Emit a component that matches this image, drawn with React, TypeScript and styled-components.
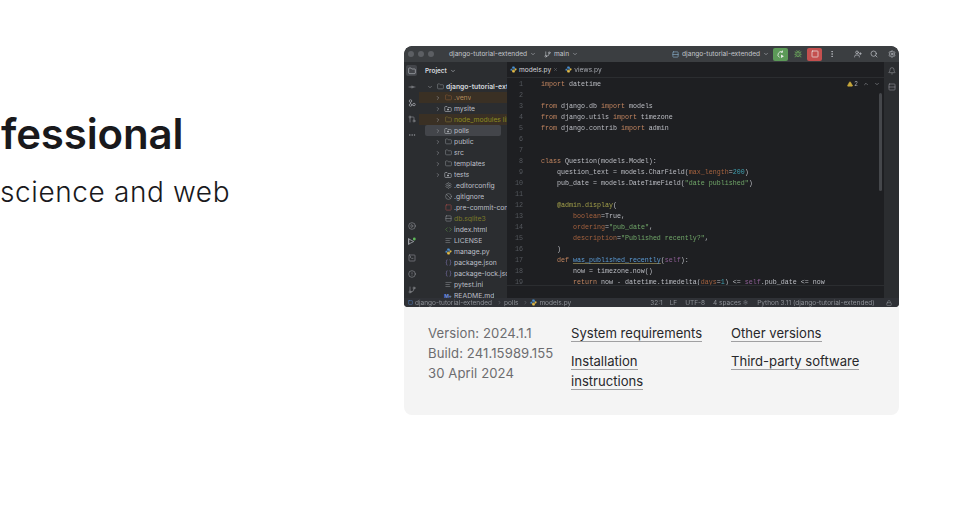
import { createGlobalStyle } from "styled-components";
import styled from "styled-components";
import {
  AlignLeft, Ban, Bell, Braces, Bug, ChevronDown, ChevronRight, ChevronUp, CircleAlert, Code, Folder,
  GitBranch, GitCommitHorizontal, GitPullRequest, Lock, MoreHorizontal, MoreVertical,
  PlayCircle, Rows2, Search, Settings, Square, SquareTerminal, TriangleAlert, UserPlus, X,
} from "lucide-react";
import type { ReactNode } from "react";

const GlobalStyle = createGlobalStyle`
  html, body { margin: 0; background: #fff; overflow: hidden; }
  body { font-family: Inter, "Liberation Sans", sans-serif; }
`;

const Page = styled.div`
  display: flex;
  width: 966px;
  height: 505px;
  overflow: hidden;
`;

const Hero = styled.div`
  flex: 0 0 404px;
  padding-top: 106px;
  box-sizing: border-box;
  color: #19191c;
`;

const Heading = styled.h1`
  margin: 0 0 0 1px;
  font-size: 42px;
  line-height: 56px;
  font-weight: 600;
  letter-spacing: -0.15px;
`;

const Subheading = styled.p`
  margin: 6px 0 0 0;
  font-size: 28px;
  line-height: 48px;
  font-weight: 300;
  white-space: nowrap;
  letter-spacing: 0.6px;
`;

const Card = styled.section`
  flex: 0 0 495px;
  height: 369px;
  margin-top: 46px;
  border-radius: 8px;
  background: #f4f4f4;
  overflow: hidden;
`;

const Shot = styled.div`
  height: 261px;
  display: flex;
  flex-direction: column;
  overflow: hidden;
  border-radius: 8px 8px 4px 4px;
  background: #2b2d30;
  color: #b8bbc2;
`;

const Blurred = styled.div`
  display: flex;
  flex-direction: column;
  height: 100%;
  filter: blur(0.35px);
`;

const TitleBar = styled.div`
  flex: 0 0 16px;
  display: flex;
  align-items: center;
  padding-left: 4px;
  background: #3b3e41;
  font-size: 6.6px;
  color: #c3c6cc;
  white-space: nowrap;
`;

const Light = styled.span`
  width: 6px;
  height: 6px;
  border-radius: 50%;
  margin-right: 4px;
  background: #5c5f63;
`;

const TitleGroup = styled.div<{ $left: number }>`
  display: flex;
  align-items: center;
  gap: 3px;
  margin-left: ${({ $left }) => $left}px;
`;

const RunButton = styled.span<{ $color: string }>`
  width: 15px;
  height: 13px;
  border-radius: 2px;
  display: flex;
  align-items: center;
  justify-content: center;
  background: ${({ $color }) => $color};
  color: #eef0ee;
`;

const TitleIcon = styled.span<{ $left: number }>`
  display: flex;
  margin-left: ${({ $left }) => $left}px;
`;

const Body = styled.div`
  flex: 1;
  display: flex;
  min-height: 0;
`;

const ToolStrip = styled.div<{ $width: number }>`
  flex: 0 0 ${({ $width }) => $width}px;
  display: flex;
  flex-direction: column;
  align-items: center;
  gap: 5px;
  padding-top: 3px;
  box-sizing: border-box;
  background: #2b2d30;
  color: #a4a7ad;
`;

const StripSlot = styled.span<{ $active?: boolean }>`
  width: 11px;
  height: 11px;
  display: flex;
  align-items: center;
  justify-content: center;
  border-radius: 2px;
  color: ${({ $active }) => ($active ? "#d5d8de" : "inherit")};
  background: ${({ $active }) => ($active ? "#43454a" : "transparent")};
`;

const StripBottom = styled.div`
  margin-top: auto;
  display: flex;
  flex-direction: column;
  gap: 5px;
  padding-bottom: 3px;
`;

const Project = styled.div`
  flex: 0 0 88px;
  overflow: hidden;
  background: #2b2d30;
  white-space: nowrap;
  font-size: 6.8px;
`;

const ProjectHead = styled.div`
  height: 18px;
  display: flex;
  align-items: center;
  gap: 3px;
  padding-left: 6px;
  font-weight: 600;
  font-size: 6.4px;
  color: #d5d8de;
`;

const Tree = styled.div`
  padding-top: 1px;
`;

const Row = styled.div<{ $tone?: string; $indent: number }>`
  height: 11px;
  display: flex;
  align-items: center;
  gap: 2px;
  padding-left: ${({ $indent }) => $indent}px;
  margin-right: ${({ $tone }) => ($tone === "selected" ? "6px" : "0")};
  margin-left: ${({ $tone }) => ($tone === "selected" ? "6px" : "0")};
  border-radius: ${({ $tone }) => ($tone === "selected" ? "2px" : "0")};
  background: ${({ $tone }) =>
    $tone === "selected" ? "#43454a" : $tone === "ignored" ? "#3a3024" : "transparent"};
`;

const RowLabel = styled.span<{ $color?: string; $bold?: boolean }>`
  min-width: 0;
  overflow: hidden;
  color: ${({ $color }) => $color ?? "#bcbfc6"};
  font-weight: ${({ $bold }) => ($bold ? 600 : 400)};
`;

const RowIcon = styled.span<{ $color?: string }>`
  flex: 0 0 8px;
  display: flex;
  align-items: center;
  justify-content: center;
  color: ${({ $color }) => $color ?? "#a4a7ad"};
`;

const ReadmeMark = styled.span`
  font-size: 5px;
  font-weight: 700;
  letter-spacing: -0.3px;
  color: #6c8fe0;
`;

const Editor = styled.div`
  flex: 0 0 377px;
  display: flex;
  flex-direction: column;
  min-width: 0;
  background: #1e1f22;
`;

const Tabs = styled.div`
  flex: 0 0 15px;
  display: flex;
  align-items: center;
  padding: 0 7px 0 3px;
  border-bottom: 1px solid #2b2d30;
  font-size: 6.6px;
  color: #b8bbc2;
`;

const Tab = styled.div<{ $active?: boolean }>`
  display: flex;
  align-items: center;
  gap: 2px;
  margin-right: 7px;
  color: ${({ $active }) => ($active ? "#d5d8de" : "#a8abb2")};
`;

const CodeWrap = styled.div`
  position: relative;
  flex: 1;
  min-height: 0;
  display: flex;
  flex-direction: column;
`;

const CodeArea = styled.div`
  flex: 0 0 208px;
  height: 208px;
  overflow: hidden;
  padding-top: 1px;
  box-sizing: border-box;
  border-bottom: 1px solid #2b2d30;
`;

const CodeLine = styled.div`
  height: 11px;
  display: flex;
  font-family: "Liberation Mono", "DejaVu Sans Mono", monospace;
  font-size: 6.67px;
  line-height: 11px;
  white-space: pre;
`;

const LineNumber = styled.span`
  flex: 0 0 16px;
  text-align: right;
  color: #55585e;
  margin-right: 18px;
`;

const Token = styled.span<{ $kind?: string }>`
  color: ${({ $kind }) =>
    ({
      kw: "#c2855f",
      str: "#70a668",
      arg: "#a5623e",
      num: "#3f9fb0",
      self: "#8e5e96",
      dec: "#a3a04a",
      def: "#5b9bd5",
    })[$kind ?? ""] ?? "#bcbec4"};
  text-decoration: ${({ $kind }) => ($kind === "def" ? "underline #77704a" : "none")};
`;

const Marker = styled.div`
  position: absolute;
  top: 2px;
  right: 4px;
  display: flex;
  align-items: center;
  gap: 5px;
  font-size: 6px;
  color: #a4a7ad;
`;

const MarkerCount = styled.span`
  display: flex;
  align-items: center;
  gap: 1px;
`;

const Scrollbar = styled.div`
  position: absolute;
  top: 15px;
  right: 2px;
  width: 3px;
  height: 98px;
  border-radius: 2px;
  background: #45474b;
`;

const StatusBar = styled.div`
  flex: 0 0 9px;
  display: flex;
  align-items: center;
  padding: 0 8px 0 4px;
  background: #2f3136;
  font-size: 6.5px;
  color: #8d9096;
  white-space: nowrap;
  overflow: hidden;
`;

const StatusItem = styled.span<{ $left?: number }>`
  display: flex;
  align-items: center;
  gap: 2px;
  margin-left: ${({ $left }) => $left ?? 0}px;
`;

const Meta = styled.div`
  display: grid;
  grid-template-columns: 143px 160px 1fr;
  padding: 16px 0 24px 24px;
  font-size: 13.1px;
  line-height: 20px;
`;

const Facts = styled.div`
  color: #6c6c6f;
  letter-spacing: 0.1px;
`;

const LinkColumn = styled.div`
  display: flex;
  flex-direction: column;
  align-items: flex-start;
  gap: 8px;
`;

const LinkText = styled.a<{ $narrow?: boolean }>`
  max-width: ${({ $narrow }) => ($narrow ? "90px" : "none")};
  color: #28282b;
  text-decoration: none;
  & > span {
    border-bottom: 1px solid #a0a0a2;
    box-decoration-break: clone;
  }
`;

const PythonIcon = () => (
  <svg width="7" height="7" viewBox="0 0 16 16">
    <path d="M8 1C5 1 5 2.300 5 3.500V5h3.500v1H3C1.500 6 1 7.500 1 8.500S1.600 11 3 11h1V9.500C4 8 5 7.500 6 7.500h3.500c1 0 1.500-.7 1.500-1.500V3.500C11 2 10 1 8 1z" fill="#4a8fd1" />
    <path d="M8 15c3 0 3-1.300 3-2.500V11H7.500v-1H13c1.500 0 2-1.500 2-2.500S14.400 5 13 5h-1v1.500C12 8 11 8.500 10 8.500H6.500C5.500 8.500 5 9.200 5 10v2.500C5 14 6 15 8 15z" fill="#e8c04a" />
  </svg>
);

const ModuleFolder = ({ color }: { color?: string }) => (
  <svg width="8" height="8" viewBox="0 0 16 16" fill="none" stroke={color ?? "#a4a7ad"} strokeWidth="1.400">
    <path d="M1.500 4.500a1.500 1.500 0 0 1 1.500-1.500h3l2 2h5a1.500 1.500 0 0 1 1.500 1.500v5a1.500 1.500 0 0 1-1.500 1.500H3a1.500 1.500 0 0 1-1.500-1.500z" />
    <rect x="6" y="7.500" width="4" height="3" fill={color ?? "#a4a7ad"} stroke="none" />
  </svg>
);

// rerun arrow with a small play mark, from the green button
const RerunIcon = () => (
  <svg width="9" height="9" viewBox="0 0 16 16" fill="none" stroke="currentColor" strokeWidth="1.500">
    <path d="M11.500 3.500A5.500 5.500 0 1 0 6.500 13.300" />
    <path d="M11.500 1v3H8.500" />
    <path d="M9 8l5 3-5 3z" fill="currentColor" stroke="none" />
  </svg>
);

const StructureIcon = () => (
  <svg width="8" height="8" viewBox="0 0 16 16" fill="none" stroke="currentColor" strokeWidth="1.500">
    <circle cx="5" cy="4" r="2.500" />
    <circle cx="5" cy="12" r="2.500" />
    <circle cx="12" cy="11" r="2.500" />
    <path d="M5 6.500v3M7.500 12h2" />
  </svg>
);

const ServicesIcon = () => (
  <svg width="9" height="9" viewBox="0 0 16 16" fill="none" stroke="currentColor" strokeWidth="1.500">
    <path d="M3 3.500l9 4.500-9 4.500z" />
    <path d="M3 2v12" />
    <circle cx="13" cy="3.500" r="2.500" fill="#5fb85a" stroke="none" />
  </svg>
);

const small = { size: 7, strokeWidth: 1.5 };
const strip = { size: 8, strokeWidth: 1.5 };

type TreeRow = {
  label: string;
  icon: ReactNode;
  arrow?: boolean;
  tone?: string;
  color?: string;
};

const folder = <Folder {...small} />;
const module = <ModuleFolder />;

const treeRows: TreeRow[] = [
  { label: ".venv", icon: <Folder {...small} color="#a0683c" />, arrow: true, tone: "ignored", color: "#b08a5c" },
  { label: "mysite", icon: module, arrow: true },
  { label: "node_modules  library", icon: <Folder {...small} color="#9a8a3c" />, arrow: true, tone: "ignored", color: "#8c8a20" },
  { label: "polls", icon: module, arrow: true, tone: "selected" },
  { label: "public", icon: folder, arrow: true },
  { label: "src", icon: folder, arrow: true },
  { label: "templates", icon: folder, arrow: true },
  { label: "tests", icon: module, arrow: true },
  { label: ".editorconfig", icon: <Settings {...small} /> },
  { label: ".gitignore", icon: <Ban {...small} /> },
  { label: ".pre-commit-config.yaml", icon: <Square {...small} color="#c75450" /> },
  { label: "db.sqlite3", icon: <Rows2 {...small} />, color: "#7c7a28" },
  { label: "index.html", icon: <Code {...small} color="#6aa84f" /> },
  { label: "LICENSE", icon: <AlignLeft {...small} /> },
  { label: "manage.py", icon: <PythonIcon /> },
  { label: "package.json", icon: <Braces {...small} color="#8f83c9" /> },
  { label: "package-lock.json", icon: <Braces {...small} color="#8f83c9" /> },
  { label: "pytest.ini", icon: <AlignLeft {...small} /> },
  { label: "README.md", icon: <ReadmeMark>M+</ReadmeMark> },
];

type Part = [string, string?];

const codeLines: Part[][] = [
  [["import", "kw"], [" datetime"]],
  [],
  [["from", "kw"], [" django.db "], ["import", "kw"], [" models"]],
  [["from", "kw"], [" django.utils "], ["import", "kw"], [" timezone"]],
  [["from", "kw"], [" django.contrib "], ["import", "kw"], [" admin"]],
  [],
  [],
  [["class", "kw"], [" Question(models.Model):"]],
  [["    question_text = models.CharField("], ["max_length", "arg"], ["="], ["200", "num"], [")"]],
  [["    pub_date = models.DateTimeField("], ['"date published"', "str"], [")"]],
  [],
  [["    "], ["@admin.display", "dec"], ["("]],
  [["        "], ["boolean", "arg"], ["=True,"]],
  [["        "], ["ordering", "arg"], ["="], ['"pub_date"', "str"], [","]],
  [["        "], ["description", "arg"], ["="], ['"Published recently?"', "str"], [","]],
  [["    )"]],
  [["    "], ["def", "kw"], [" "], ["was_published_recently", "def"], ["("], ["self", "self"], ["):"]],
  [["        now = timezone.now()"]],
  [["        "], ["return", "kw"], [" now - datetime.timedelta("], ["days", "arg"], ["="], ["1", "num"], [") <= "], ["self", "self"], [".pub_date <= now"]],
];

const App = () => (
  <Page>
    <GlobalStyle />
    <Hero>
      <Heading>fessional</Heading>
      <Subheading>science and web</Subheading>
    </Hero>
    <Card>
      <Shot>
        <Blurred>
          <TitleBar>
            <Light />
            <Light />
            <Light />
            <TitleGroup $left={11}>
              django-tutorial-extended <ChevronDown size={6} />
            </TitleGroup>
            <TitleGroup $left={8}>
              <GitBranch size={7} /> main <ChevronDown size={6} />
            </TitleGroup>
            <TitleGroup $left={94}>
              <Rows2 size={7} color="#8fb8d8" /> django-tutorial-extended <ChevronDown size={6} />
            </TitleGroup>
            <TitleGroup $left={4}>
              <RunButton $color="#5c9a58"><RerunIcon /></RunButton>
              <TitleIcon $left={3}><Bug size={8} color="#6fae5f" /></TitleIcon>
              <TitleIcon $left={2}><RunButton $color="#c4504f"><Square size={8} strokeWidth={2} /></RunButton></TitleIcon>
              <TitleIcon $left={3}><MoreVertical size={8} /></TitleIcon>
              <TitleIcon $left={15}><UserPlus size={8} /></TitleIcon>
              <TitleIcon $left={5}><Search size={8} /></TitleIcon>
              <TitleIcon $left={7}><Settings size={8} /></TitleIcon>
            </TitleGroup>
          </TitleBar>
          <Body>
            <ToolStrip $width={15}>
              <StripSlot $active><Folder {...strip} /></StripSlot>
              <StripSlot><GitCommitHorizontal {...strip} /></StripSlot>
              <StripSlot><StructureIcon /></StripSlot>
              <StripSlot><GitPullRequest {...strip} /></StripSlot>
              <StripSlot><MoreHorizontal {...strip} /></StripSlot>
              <StripBottom>
                <StripSlot><PlayCircle {...strip} /></StripSlot>
                <StripSlot><ServicesIcon /></StripSlot>
                <StripSlot><SquareTerminal {...strip} /></StripSlot>
                <StripSlot><CircleAlert {...strip} /></StripSlot>
                <StripSlot><GitBranch {...strip} /></StripSlot>
              </StripBottom>
            </ToolStrip>
            <Project>
              <ProjectHead>Project <ChevronDown size={6} /></ProjectHead>
              <Tree>
                <Row $indent={7}>
                  <RowIcon><ChevronDown size={6} /></RowIcon>
                  <RowIcon><Folder size={7} strokeWidth={1.5} /></RowIcon>
                  <RowLabel $color="#d5d8de" $bold>django-tutorial-extended</RowLabel>
                </Row>
                {treeRows.map((row) => (
                  <Row key={row.label} $tone={row.tone} $indent={row.tone === "selected" ? 9 : row.arrow ? 15 : 25}>
                    {row.arrow && <RowIcon><ChevronRight size={6} /></RowIcon>}
                    <RowIcon>{row.icon}</RowIcon>
                    <RowLabel $color={row.color}>{row.label}</RowLabel>
                  </Row>
                ))}
              </Tree>
            </Project>
            <Editor>
              <Tabs>
                <Tab $active><PythonIcon /> models.py <X size={5} color="#7a7d83" /></Tab>
                <Tab><PythonIcon /> views.py</Tab>
                <TitleIcon $left={278}><MoreVertical size={7} /></TitleIcon>
              </Tabs>
              <CodeWrap>
                <CodeArea>
                  {codeLines.map((parts, i) => (
                    <CodeLine key={i}>
                      <LineNumber>{i + 1}</LineNumber>
                      <span>
                        {parts.map(([text, kind], j) => (
                          <Token key={j} $kind={kind}>{text}</Token>
                        ))}
                      </span>
                    </CodeLine>
                  ))}
                </CodeArea>
                <Marker>
                  <MarkerCount><TriangleAlert size={6} color="#c9a93c" fill="#c9a93c" /> 2</MarkerCount>
                  <ChevronUp size={6} />
                  <ChevronDown size={6} />
                </Marker>
                <Scrollbar />
              </CodeWrap>
            </Editor>
            <ToolStrip $width={15}>
              <StripSlot><Bell {...strip} /></StripSlot>
              <StripSlot><Rows2 {...strip} /></StripSlot>
            </ToolStrip>
          </Body>
          <StatusBar>
            <StatusItem><Square size={5} color="#5b8fd9" /> django-tutorial-extended</StatusItem>
            <StatusItem $left={5}><ChevronRight size={5} /> polls</StatusItem>
            <StatusItem $left={5}><ChevronRight size={5} /> <PythonIcon /> models.py</StatusItem>
            <StatusItem $left={79}>32:1</StatusItem>
            <StatusItem $left={7}>LF</StatusItem>
            <StatusItem $left={8}>UTF-8</StatusItem>
            <StatusItem $left={8}>4 spaces <Settings size={5} /></StatusItem>
            <StatusItem $left={9}>Python 3.11 (django-tutorial-extended)</StatusItem>
            <StatusItem $left={11}><Lock size={6} /></StatusItem>
          </StatusBar>
        </Blurred>
      </Shot>
      <Meta>
        <Facts>
          Version: 2024.1.1<br />
          Build: 241.15989.155<br />
          30 April 2024
        </Facts>
        <LinkColumn>
          <LinkText href="#"><span>System requirements</span></LinkText>
          <LinkText href="#" $narrow><span>Installation instructions</span></LinkText>
        </LinkColumn>
        <LinkColumn>
          <LinkText href="#"><span>Other versions</span></LinkText>
          <LinkText href="#"><span>Third-party software</span></LinkText>
        </LinkColumn>
      </Meta>
    </Card>
  </Page>
);

export default App;
